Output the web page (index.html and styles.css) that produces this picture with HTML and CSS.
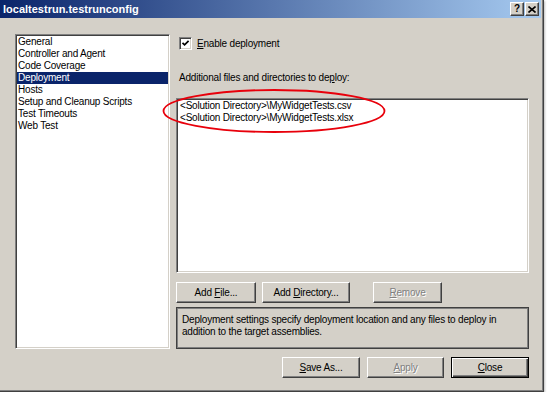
FILE: index.html
```html
<!DOCTYPE html>
<html>
<head>
<meta charset="utf-8">
<link rel="stylesheet" href="styles.css">
</head>
<body>
<div class="window">
  <div class="titlebar">
    <span class="title">localtestrun.testrunconfig</span>
    <div class="tbtns">
      <span class="tbtn help">?</span>
      <span class="tbtn close"><svg width="8" height="7" viewBox="0 0 8 7"><path d="M0.5 0.5 L7.5 6.5 M7.5 0.5 L0.5 6.5" stroke="#000" stroke-width="1.6" fill="none"/></svg></span>
    </div>
  </div>
  <div class="body">
    <div class="main">
      <ul class="catlist">
        <li>General</li>
        <li>Controller and Agent</li>
        <li>Code Coverage</li>
        <li class="sel">Deployment</li>
        <li>Hosts</li>
        <li>Setup and Cleanup Scripts</li>
        <li>Test Timeouts</li>
        <li>Web Test</li>
      </ul>
      <div class="panel">
        <div class="check">
          <span class="cbox"><svg width="9" height="9" viewBox="0 0 9 9"><path d="M1.5 3.8 L3.6 5.9 L7.6 1.9" stroke="#000" stroke-width="1.7" fill="none"/></svg></span>
          <span><u>E</u>nable deployment</span>
        </div>
        <div class="lbl">Additional files and directories to de<u>p</u>loy:</div>
        <div class="files">
          <div>&lt;Solution Directory&gt;\MyWidgetTests.csv</div>
          <div>&lt;Solution Directory&gt;\MyWidgetTests.xlsx</div>
        </div>
        <div class="btnrow">
          <span class="btn w-file"><span>Add <u>F</u>ile...</span></span>
          <span class="btn w-dir"><span>Add <u>D</u>irectory...</span></span>
          <span class="btn w-rem disabled"><span><u>R</u>emove</span></span>
        </div>
        <div class="desc">Deployment settings specify deployment location and any files to deploy in addition to the target assemblies.</div>
      </div>
    </div>
    <div class="footer">
      <span class="btn w-foot"><span><u>S</u>ave As...</span></span>
      <span class="btn w-apply disabled"><span><u>A</u>pply</span></span>
      <span class="btn w-foot default"><span><u>C</u>lose</span></span>
    </div>
  </div>
  <svg class="ellipse" width="226" height="46" viewBox="0 0 226 46"><ellipse cx="113" cy="23" rx="110.5" ry="21" fill="none" stroke="#e8000b" stroke-width="1.8"/></svg>
</div>
</body>
</html>
```

FILE: styles.css
```css
html, body {
  margin: 0;
  padding: 0;
}
body {
  background: #ffffff;
  font-family: "Liberation Sans", Arial, sans-serif;
  font-size: 10px;
  letter-spacing: -0.2px;
  color: #000;
}
.window {
  position: relative;
  width: 544px;
  height: 392px;
  box-sizing: border-box;
  padding-right: 3px;
  background: #d4d0c8;
  box-shadow: inset -1px -1px 0 #404040, inset -2px -2px 0 #808080, 1px 1px 2px rgba(0,0,0,0.25);
  display: flex;
  flex-direction: column;
}
.titlebar {
  height: 18px;
  flex: none;
  background: linear-gradient(to right, #0a246a, #a6caf0);
  display: flex;
  align-items: center;
  justify-content: space-between;
  padding-left: 3px;
}
.title {
  color: #fff;
  font-weight: bold;
  font-size: 11px;
  letter-spacing: 0;
}
.tbtns {
  display: flex;
  gap: 1px;
  margin-right: 2px;
}
.tbtn {
  width: 14px;
  height: 14px;
  box-sizing: border-box;
  background: #d4d0c8;
  border: 1px solid;
  border-color: #fff #404040 #404040 #fff;
  box-shadow: inset -1px -1px 0 #808080;
  display: flex;
  align-items: center;
  justify-content: center;
  font-weight: bold;
  font-size: 10px;
  letter-spacing: 0;
  line-height: 1;
}
.body {
  padding: 16px 12px 0 15px;
  display: flex;
  flex-direction: column;
}
.main {
  display: flex;
  gap: 6px;
  height: 315px;
}
.catlist {
  list-style: none;
  margin: 0;
  padding: 0;
  width: 155px;
  height: 315px;
  box-sizing: border-box;
  background: #fff;
  border: 1px solid;
  border-color: #808080 #fff #fff #808080;
  box-shadow: inset 1px 1px 0 #404040, inset -1px -1px 0 #d4d0c8;
  padding: 1px 1px;
}
.catlist li {
  height: 12px;
  line-height: 12px;
  padding-left: 1px;
  white-space: nowrap;
}
.catlist li.sel {
  background: #0a246a;
  color: #fff;
}
.panel {
  width: 353px;
  display: flex;
  flex-direction: column;
}
.check {
  margin: 3px 0 0 3px;
  height: 13px;
  display: flex;
  align-items: center;
  gap: 5px;
}
.cbox {
  width: 13px;
  height: 13px;
  box-sizing: border-box;
  background: #fff;
  border: 1px solid;
  border-color: #808080 #fff #fff #808080;
  box-shadow: inset 1px 1px 0 #404040, inset -1px -1px 0 #d4d0c8;
  display: flex;
  align-items: center;
  justify-content: center;
}
.lbl {
  margin: 21px 0 0 3px;
  line-height: 13px;
  height: 13px;
}
.files {
  margin-top: 14px;
  height: 175px;
  box-sizing: border-box;
  background: #fff;
  border: 1px solid;
  border-color: #808080 #fff #fff #808080;
  box-shadow: inset 1px 1px 0 #404040, inset -1px -1px 0 #d4d0c8;
  padding: 1px 3px;
  line-height: 12px;
}
.btnrow {
  margin-top: 9px;
  display: flex;
  gap: 6px;
}
.btn {
  height: 21px;
  box-sizing: border-box;
  background: #d4d0c8;
  border: 1px solid;
  border-color: #fff #404040 #404040 #fff;
  box-shadow: inset -1px -1px 0 #808080;
  display: flex;
  align-items: center;
  justify-content: center;
  white-space: nowrap;
}
.btn.disabled {
  color: #808080;
  text-shadow: 1px 1px 0 #fff;
}
.btn.default {
  border: 1px solid #000;
  box-shadow: inset 1px 1px 0 #fff, inset -1px -1px 0 #404040, inset -2px -2px 0 #808080;
}
.w-file { width: 80px; }
.w-dir { width: 88px; }
.w-rem { width: 69px; margin-left: 17px; }
.w-foot { width: 78px; }
.w-apply { width: 77px; }
.desc {
  margin-top: 4px;
  height: 42px;
  box-sizing: border-box;
  border: 1px solid #404040;
  box-shadow: inset 1px 1px 0 #808080, inset -1px -1px 0 #808080;
  padding: 6px 5px 0 5px;
  line-height: 12px;
}
.footer {
  margin-top: 8px;
  display: flex;
  justify-content: flex-end;
  gap: 7px;
}
.ellipse {
  position: absolute;
  left: 161px;
  top: 88px;
}
```
